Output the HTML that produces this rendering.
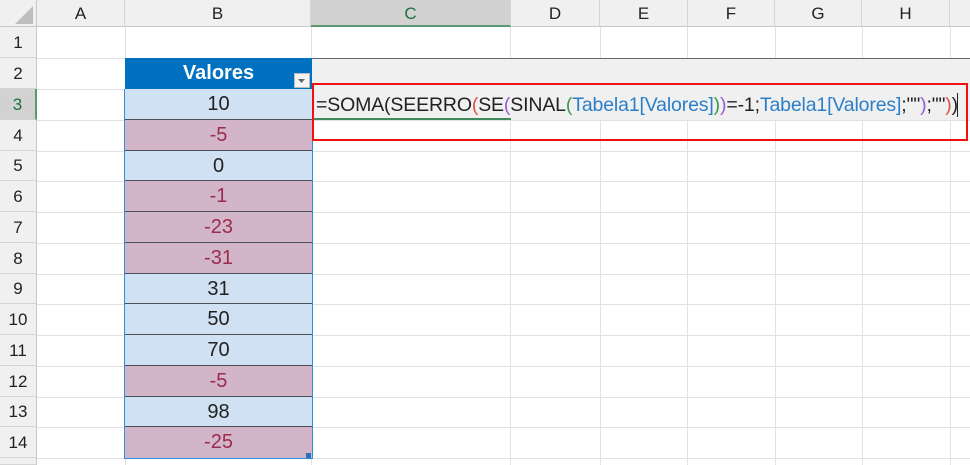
<!DOCTYPE html>
<html><head><style>
body{margin:0;width:970px;height:465px;overflow:hidden;background:#fff;font-family:"Liberation Sans",sans-serif;position:relative}
div{position:absolute;box-sizing:border-box}
.ch{top:0;height:27px;background:#f0f0f0;border-right:1px solid #d4d4d4;border-bottom:1px solid #c8c8c8;text-align:center;font-size:17px;line-height:27px;color:#222}
.rh{left:0;width:37px;background:#f0f0f0;border-bottom:1px solid #d4d4d4;border-right:1px solid #c8c8c8;text-align:center;font-size:17px;color:#222}
.vl{top:27px;width:1px;height:438px;background:#e1e1e1}
.hl{left:37px;width:933px;height:1px;background:#e1e1e1}
.c{left:125px;width:187px;text-align:center;font-size:20px;border-bottom:1.5px solid #4a4f5a}
.b{background:#cfe1f2;color:#222}
.p{background:#d3b5c9;color:#9b2c4c}
</style></head><body>
<div style="left:0;top:0;width:37px;height:27px;background:#f0f0f0;border-right:1px solid #c8c8c8;border-bottom:1px solid #c8c8c8"></div>
<svg style="position:absolute;left:14px;top:6px" width="20" height="19"><polygon points="19,0 19,18 1,18" fill="#bdbdbd"/></svg>
<div class="ch" style="left:37px;width:88px">A</div>
<div class="ch" style="left:125px;width:186px">B</div>
<div class="ch" style="left:311px;width:200px;background:#d2d2d2;color:#1e6e42;border-bottom:2px solid #5a9a70">C</div>
<div class="ch" style="left:511px;width:89px">D</div>
<div class="ch" style="left:600px;width:88px">E</div>
<div class="ch" style="left:688px;width:87px">F</div>
<div class="ch" style="left:775px;width:87px">G</div>
<div class="ch" style="left:862px;width:88px">H</div>
<div class="ch" style="left:950px;width:20px;border-right:none"></div>

<div class="vl" style="left:125px"></div><div class="vl" style="left:311px"></div><div class="vl" style="left:510px"></div><div class="vl" style="left:600px"></div><div class="vl" style="left:687px"></div><div class="vl" style="left:775px"></div><div class="vl" style="left:862px"></div><div class="vl" style="left:950px"></div>
<div class="hl" style="top:58px"></div><div class="hl" style="top:89px"></div><div class="hl" style="top:120px"></div><div class="hl" style="top:151px"></div><div class="hl" style="top:181px"></div><div class="hl" style="top:212px"></div><div class="hl" style="top:243px"></div><div class="hl" style="top:274px"></div><div class="hl" style="top:304px"></div><div class="hl" style="top:335px"></div><div class="hl" style="top:366px"></div><div class="hl" style="top:397px"></div><div class="hl" style="top:427px"></div><div class="hl" style="top:458px"></div>

<div class="rh" style="top:27px;height:31px;line-height:31px">1</div>
<div class="rh" style="top:58px;height:31px;line-height:31px">2</div>
<div class="rh" style="top:89px;height:31px;line-height:31px;background:#d2d2d2;color:#1e6e42;border-right:2px solid #5a9a70">3</div>
<div class="rh" style="top:120px;height:31px;line-height:31px">4</div>
<div class="rh" style="top:151px;height:30px;line-height:30px">5</div>
<div class="rh" style="top:181px;height:31px;line-height:31px">6</div>
<div class="rh" style="top:212px;height:31px;line-height:31px">7</div>
<div class="rh" style="top:243px;height:31px;line-height:31px">8</div>
<div class="rh" style="top:274px;height:30px;line-height:30px">9</div>
<div class="rh" style="top:304px;height:31px;line-height:31px">10</div>
<div class="rh" style="top:335px;height:31px;line-height:31px">11</div>
<div class="rh" style="top:366px;height:31px;line-height:31px">12</div>
<div class="rh" style="top:397px;height:30px;line-height:30px">13</div>
<div class="rh" style="top:427px;height:31px;line-height:31px">14</div>
<div class="rh" style="top:458px;height:7px"></div>

<div style="left:312px;top:58px;width:658px;height:62px;background:#f0f0f0;border-top:1px solid #666"></div>
<div style="left:312px;top:118px;width:199px;height:2px;background:#3f8a5a"></div>

<div class="c" style="top:58px;height:31px;line-height:31px;background:#0070c0;color:#fff;font-weight:bold;border:none">Valores</div>
<div style="left:294px;top:73px;width:16px;height:15px;background:#f4f4f4;border:1px solid #bbb"></div>
<svg style="position:absolute;left:298px;top:79px" width="8" height="5"><polygon points="0,0 7,0 3.5,4" fill="#666"/></svg>
<div class="c b" style="top:89px;height:31px;line-height:31px">10</div>
<div class="c p" style="top:120px;height:31px;line-height:31px">-5</div>
<div class="c b" style="top:151px;height:30px;line-height:30px">0</div>
<div class="c p" style="top:181px;height:31px;line-height:31px">-1</div>
<div class="c p" style="top:212px;height:31px;line-height:31px">-23</div>
<div class="c p" style="top:243px;height:31px;line-height:31px">-31</div>
<div class="c b" style="top:274px;height:30px;line-height:30px">31</div>
<div class="c b" style="top:304px;height:31px;line-height:31px">50</div>
<div class="c b" style="top:335px;height:31px;line-height:31px">70</div>
<div class="c p" style="top:366px;height:31px;line-height:31px">-5</div>
<div class="c b" style="top:397px;height:30px;line-height:30px">98</div>
<div class="c p" style="top:427px;height:31px;line-height:31px;border-bottom:none">-25</div>
<div style="left:124px;top:89px;width:189px;height:370px;border:1.5px solid #2f8fd8;border-top:none"></div>
<div style="left:306px;top:453px;width:5px;height:5px;background:#2f6fbf"></div>

<div style="left:312px;top:83px;width:656px;height:58px;border:2.5px solid #f01010"></div>
<div style="left:316px;top:91px;height:28px;line-height:28px;font-size:19.5px;white-space:nowrap;color:#222;letter-spacing:-0.15px">=SOMA(SEERRO<span style="color:#e0504a">(</span>SE<span style="color:#9a5ad0">(</span>SINAL<span style="color:#3a9a4a">(</span><span style="color:#2a7fc8">Tabela1[Valores]</span><span style="color:#3a9a4a">)</span><span style="color:#9a5ad0">)</span>=-1;<span style="color:#2a7fc8">Tabela1[Valores]</span>;""<span style="color:#9a5ad0">)</span>;""<span style="color:#e0504a">)</span>)</div>
<div style="left:957px;top:93px;width:1px;height:24px;background:#222"></div>
</body></html>
